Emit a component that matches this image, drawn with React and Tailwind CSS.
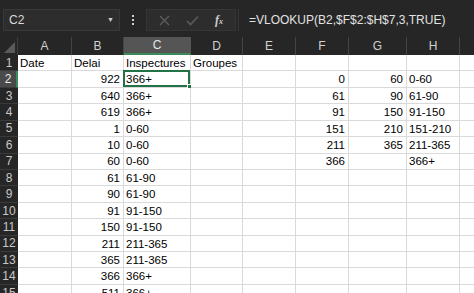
import React from 'react';

const COLS = [
  { key: 'A', w: 54 },
  { key: 'B', w: 52 },
  { key: 'C', w: 67 },
  { key: 'D', w: 52 },
  { key: 'E', w: 53 },
  { key: 'F', w: 53 },
  { key: 'G', w: 58 },
  { key: 'H', w: 53 },
  { key: 'I', w: 53, hidden: true },
];

// each row: values keyed by column, numbers right aligned
const ROWS = [
  { A: 'Date', B: 'Delai', C: 'Inspectures', D: 'Groupes' },
  { B: 922, C: '366+', F: 0, G: 60, H: '0-60' },
  { B: 640, C: '366+', F: 61, G: 90, H: '61-90' },
  { B: 619, C: '366+', F: 91, G: 150, H: '91-150' },
  { B: 1, C: '0-60', F: 151, G: 210, H: '151-210' },
  { B: 10, C: '0-60', F: 211, G: 365, H: '211-365' },
  { B: 60, C: '0-60', F: 366, H: '366+' },
  { B: 61, C: '61-90' },
  { B: 90, C: '61-90' },
  { B: 91, C: '91-150' },
  { B: 150, C: '91-150' },
  { B: 211, C: '211-365' },
  { B: 365, C: '211-365' },
  { B: 366, C: '366+' },
  { B: 511, C: '366+' },
];

const font = { fontFamily: '"Liberation Sans", Arial, sans-serif' };

function Cell({ col, value, selected }) {
  const isNum = typeof value === 'number';
  return (
    <div
      className={`relative shrink-0 h-full border-r border-b border-[#dadada] flex items-end pb-[1px] text-[11.5px] text-black leading-none whitespace-nowrap ${isNum ? 'justify-end pr-[3px]' : 'justify-start pl-[2px]'}`}
      style={{ width: col.w }}
    >
      <span>{value}</span>
      {selected && (
        <div className="absolute -left-[1px] -top-[1px] right-0 bottom-0 border-2 border-[#217346] pointer-events-none">
          <div className="absolute -right-[4px] -bottom-[4px] w-[5px] h-[5px] bg-[#217346] border border-white" />
        </div>
      )}
    </div>
  );
}

export default function App() {
  return (
    <div className="w-[474px] h-[293px] overflow-hidden bg-[#262626] flex flex-col" style={font}>
      {/* Formula bar */}
      <div className="h-[37px] shrink-0 flex items-start pt-[9px]">
        <div className="ml-[3px] w-[117px] h-[22px] bg-[#2d2d2d] border border-[#383838] flex items-center justify-between px-[5px]">
          <span className="text-[12px] text-[#d8d8d8]">C2</span>
          <span className="text-[7px] text-[#cfcfcf]">▼</span>
        </div>
        <div className="w-[26px] h-[22px] flex flex-col items-center justify-center gap-[2px]">
          <span className="w-[2px] h-[2px] bg-[#cfcfcf]" />
          <span className="w-[2px] h-[2px] bg-[#cfcfcf]" />
          <span className="w-[2px] h-[2px] bg-[#cfcfcf]" />
        </div>
        <div className="w-[90px] h-[22px] bg-[#2d2d2d] border border-[#363636] flex items-center justify-around px-[4px]">
          <svg width="11" height="11" viewBox="0 0 11 11">
            <path d="M1 1 L10 10 M10 1 L1 10" stroke="#5c5c5c" strokeWidth="1.4" />
          </svg>
          <svg width="13" height="11" viewBox="0 0 13 11">
            <path d="M1 6 L4.5 9.5 L12 1.5" stroke="#5c5c5c" strokeWidth="1.6" fill="none" />
          </svg>
          <span className="text-[12px] italic font-bold text-[#cfcfcf]" style={{ fontFamily: '"Liberation Serif", serif' }}>
            f<span className="text-[8px]">x</span>
          </span>
        </div>
        <div className="ml-[2px] flex-1 h-[22px] bg-[#262626] border-l border-[#363636] flex items-center pl-[10px]">
          <span className="text-[12px] text-[#e2e2e2] whitespace-nowrap">=VLOOKUP(B2,$F$2:$H$7,3,TRUE)</span>
        </div>
      </div>

      {/* Column headers */}
      <div className="h-[18px] shrink-0 flex">
        <div className="relative w-[18px] shrink-0 h-full border-r border-[#3c3c3c]">
          <div className="absolute right-[2px] bottom-[2px] w-0 h-0 border-l-[11px] border-l-transparent border-b-[11px] border-b-[#5a5a5a]" />
        </div>
        {COLS.map((c) => (
          <div
            key={c.key}
            className={`shrink-0 h-full flex items-center justify-center text-[12px] border-r ${c.key === 'C' ? 'bg-[#555555] border-[#555555] border-b-2 border-b-[#3a8a5c] text-[#e6e6e6]' : 'border-[#444444] text-[#d0d0d0]'}`}
            style={{ width: c.w }}
          >
            {c.hidden ? '' : c.key}
          </div>
        ))}
      </div>

      {/* Grid */}
      <div className="flex-1 flex flex-col">
        {ROWS.map((row, i) => {
          const n = i + 1;
          const sel = n === 2;
          return (
            <div key={n} className="h-[16.43px] shrink-0 flex">
              <div
                className={`w-[18px] shrink-0 h-full flex items-center justify-center text-[12px] border-b border-[#3a3a3a] ${sel ? 'bg-[#4a4a4a] text-[#e8e8e8] border-r-2 border-r-[#3a8a5c]' : 'bg-[#262626] text-[#c8c8c8]'}`}
              >
                {n}
              </div>
              <div className="flex-1 flex bg-white h-full">
                {COLS.map((c) => (
                  <Cell key={c.key} col={c} value={row[c.key]} selected={sel && c.key === 'C'} />
                ))}
              </div>
            </div>
          );
        })}
      </div>
    </div>
  );
}
